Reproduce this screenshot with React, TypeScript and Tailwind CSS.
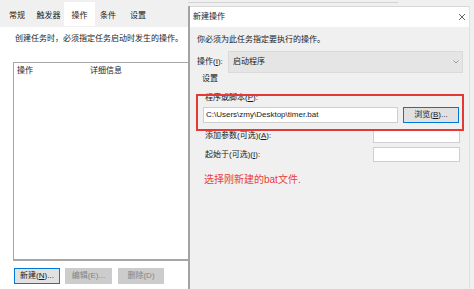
import React from "react";

const F = { fontFamily: '"Liberation Sans", "Noto Sans CJK SC", sans-serif' };

function U({ c }: { c: string }) {
  return <span className="underline underline-offset-1">{c}</span>;
}

export default function App() {
  const tabs = [
    { t: "常规", w: "w-[32px]" },
    { t: "触发器", w: "w-[31px]" },
    { t: "操作", w: "w-[31px]", sel: true },
    { t: "条件", w: "w-[26px]" },
    { t: "设置", w: "w-[34px]" },
  ];
  return (
    <div
      className="w-[474px] h-[289px] flex overflow-hidden bg-white text-[8px] leading-[12px] text-[#1a1a1a]"
      style={F}
    >
      {/* Left task window */}
      <div className="w-[188px] h-[289px] shrink-0 flex flex-col overflow-hidden bg-white">
        <div className="h-[27px] bg-[#f0f0f0] flex items-end pl-[1px] border-b border-[#f0f0f0]">
          {tabs.map((x) => (
            <div
              key={x.t}
              className={`${x.w} h-[24px] pt-[3px] flex items-center justify-center ${
                x.sel ? "bg-white" : ""
              }`}
            >
              {x.t}
            </div>
          ))}
        </div>
        <div className="pl-[15px] mt-[6px] whitespace-nowrap">
          创建任务时，必须指定任务启动时发生的操作。
        </div>
        <div className="ml-[13px] mt-[17px] w-[190px] h-[199px] shrink-0 border border-[#a6a6a6] border-b-2 bg-white">
          <div className="flex pt-[2px] pl-[3px]">
            <div className="w-[73px]">操作</div>
            <div>详细信息</div>
          </div>
        </div>
        <div className="flex ml-[14px] mt-[7px] gap-[5px]">
          <div className="w-[46px] h-[16px] flex items-center justify-center bg-[#e1e1e1] border border-[#0078d7]">
            新建(<U c="N" />)...
          </div>
          <div className="w-[47px] h-[16px] flex items-center justify-center bg-[#cccccc] text-[#838383]">
            编辑(E)...
          </div>
          <div className="w-[46px] h-[16px] flex items-center justify-center bg-[#cccccc] text-[#838383] ml-[1px]">
            删除(D)
          </div>
        </div>
      </div>

      {/* Right area with dialog */}
      <div className="flex-1 h-[289px] bg-[#f0f0f0] flex flex-col relative">
        <div className="h-[6px] border-t border-[#d4d4d4] mt-[2px] -mb-[2px] mr-[76px]" />
        <div className="flex-1 flex">
          <div className="w-[282px] flex flex-col border-l-2 border-[#a3a3a3] border-r border-r-[#e0e0e0] bg-[#f0f0f0] relative">
            {/* title bar */}
            <div className="h-[21px] bg-white flex items-center justify-between pl-[3px] pr-[3px] border-t border-[#d8d8d8]">
              <span>新建操作</span>
              <svg width="8" height="8" viewBox="0 0 8 8">
                <path d="M1 1L7 7M7 1L1 7" stroke="#555" strokeWidth="0.9" />
              </svg>
            </div>
            {/* body */}
            <div className="flex flex-col pl-[7px]">
              <div className="mt-[7px] whitespace-nowrap">你必须为此任务指定要执行的操作。</div>
              <div className="flex items-center mt-[5px]">
                <div className="w-[31px]">
                  操作(<U c="I" />):
                </div>
                <div className="w-[235px] h-[22px] bg-[#e5e5e5] border border-[#dadada] flex items-center justify-between pl-[4px] pr-[3px]">
                  <span>启动程序</span>
                  <svg width="6" height="4" viewBox="0 0 6 4">
                    <path d="M0.5 0.5L3 3L5.5 0.5" stroke="#8a8a8a" strokeWidth="0.9" fill="none" />
                  </svg>
                </div>
              </div>
              <div className="pl-[5px]">设置</div>
              <div className="pl-[8px] mt-[7px]">
                程序或脚本(<U c="P" />):
              </div>
              <div className="flex items-center mt-[3px] pl-[6px]">
                <div className="w-[195px] h-[16px] bg-white border border-[#cfcfcf] flex items-center pl-[2px] whitespace-nowrap">
                  C:\Users\zmy\Desktop\timer.bat
                </div>
                <div className="ml-[5px] w-[56px] h-[16px] bg-[#e1e1e1] border border-[#0078d7] flex items-center justify-center">
                  浏览(<U c="B" />)...
                </div>
              </div>
              <div className="flex items-center justify-between mt-[6px] pl-[8px] pr-[9px] h-[14px]">
                <span>
                  添加参数(可选)(<U c="A" />):
                </span>
                <div className="w-[87px] h-[14px] bg-white border border-[#cfcfcf]" />
              </div>
              <div className="flex items-center justify-between mt-[4px] pl-[8px] pr-[9px] h-[15px]">
                <span>
                  起始于(可选)(<U c="I" />):
                </span>
                <div className="w-[87px] h-[15px] bg-white border border-[#cfcfcf]" />
              </div>
              <div className="mt-[11px] pl-[7px] text-[10px] leading-[14px] text-[#e8403c] whitespace-nowrap">
                选择刚新建的bat文件.
              </div>
            </div>
            {/* red annotation box */}
            <div className="absolute left-[6px] top-[88px] w-[268px] h-[37px] border-2 border-[#e53935] pointer-events-none" />
          </div>
        </div>
      </div>
    </div>
  );
}
